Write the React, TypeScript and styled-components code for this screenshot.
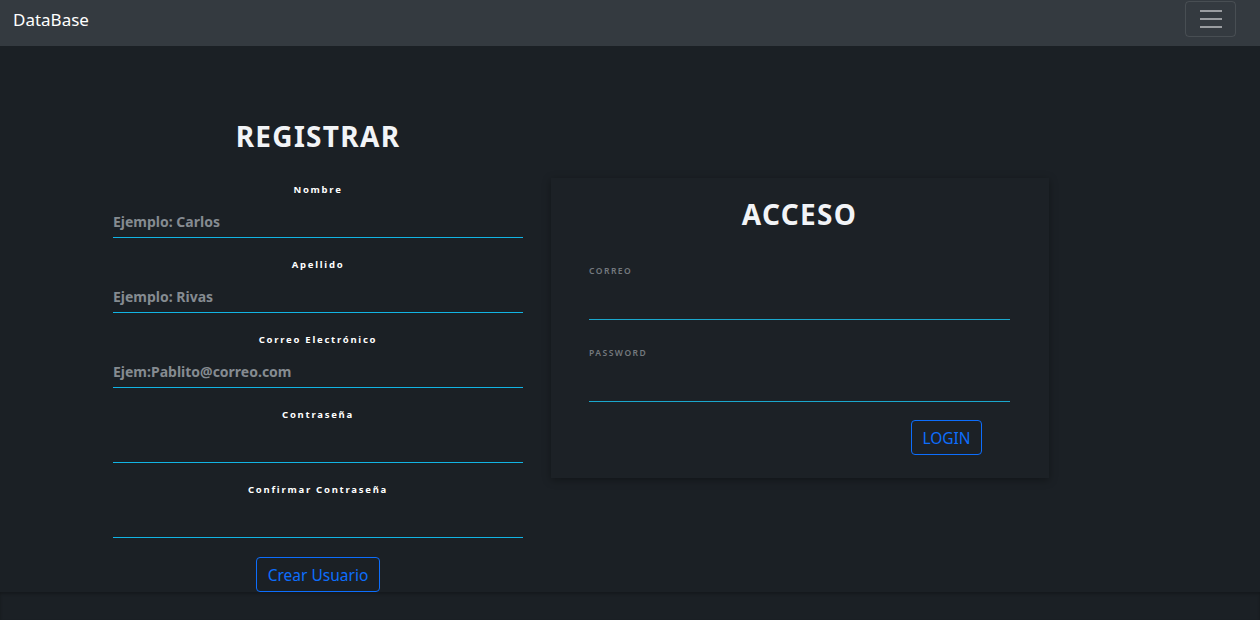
import React from "react";
import styled, { createGlobalStyle } from "styled-components";

const GlobalStyle = createGlobalStyle`
  html, body {
    margin: 0;
    padding: 0;
    background: #1b2025;
    font-family: "Noto Sans", "Open Sans", sans-serif;
  }
  * { box-sizing: border-box; }
`;

const Navbar = styled.nav`
  height: 46px;
  background: #343a40;
  display: flex;
  align-items: center;
  justify-content: space-between;
  padding: 0 24px 8px 13px;
`;

const Brand = styled.a`
  color: #fff;
  font-size: 17px;
  text-decoration: none;
`;

const Toggler = styled.button`
  width: 51px;
  height: 36px;
  background: transparent;
  border: 1px solid rgba(255, 255, 255, 0.1);
  border-radius: 4px;
  display: flex;
  flex-direction: column;
  align-items: center;
  justify-content: center;
  gap: 6px;
  padding: 0;
  span {
    display: block;
    width: 22px;
    height: 2px;
    background: #9a9da1;
  }
`;

const Main = styled.main`
  height: 546px;
  display: flex;
  align-items: flex-start;
  gap: 28px;
  padding: 70px 0 0 113px;
  overflow: hidden;
`;

const Register = styled.section`
  width: 410px;
  display: flex;
  flex-direction: column;
  align-items: center;
`;

const Title = styled.h1`
  margin: 0;
  height: 40px;
  line-height: 41px;
  font-size: 28px;
  font-weight: 700;
  letter-spacing: 1.3px;
  color: #f2f4f7;
  text-align: center;
`;

const Field = styled.div`
  width: 100%;
  display: flex;
  flex-direction: column;
  align-items: center;
  margin-top: 25px;
  & + & { margin-top: 18px; }
`;

const FieldLabel = styled.label`
  height: 17px;
  line-height: 18px;
  font-size: 9.5px;
  font-weight: 700;
  letter-spacing: 1.75px;
  color: #fff;
`;

const LineInput = styled.input`
  width: 100%;
  height: 40px;
  padding: 7px 0 0;
  background: transparent;
  border: none;
  border-bottom: 1px solid #12b4e4;
  outline: none;
  color: #fff;
  font-family: inherit;
  font-size: 14px;
  font-weight: 700;
  &::placeholder { color: #858b91; }
`;

const CreateButton = styled.button`
  margin-top: 19px;
  height: 35px;
  padding: 0 11px;
  background: transparent;
  border: 1px solid #0d6efd;
  border-radius: 4px;
  color: #0d6efd;
  font-family: inherit;
  font-size: 15.5px;
`;

const Card = styled.section`
  margin-top: 62px;
  width: 498px;
  padding: 16px 39px 23px 38px;
  background: #1c2126;
  box-shadow: 0 2px 8px rgba(0, 0, 0, 0.35);
  display: flex;
  flex-direction: column;
`;

const CardField = styled.div`
  display: flex;
  flex-direction: column;
  margin-top: 30px;
  & + & { margin-top: 26px; }
`;

const CardLabel = styled.label`
  height: 13px;
  line-height: 14px;
  font-size: 8.5px;
  font-weight: 600;
  letter-spacing: 1.5px;
  text-transform: uppercase;
  color: #74797e;
`;

const CardInput = styled(LineInput)`
  height: 43px;
  border-bottom-color: #1aa7cc;
`;

const Actions = styled.div`
  display: flex;
  justify-content: flex-end;
  padding-right: 28px;
  margin-top: 18px;
`;

const LoginButton = styled(CreateButton)`
  margin-top: 0;
  width: 71px;
  padding: 0;
`;

const Footer = styled.footer`
  height: 28px;
  background: #1b2025;
  box-shadow: inset 0 2px 3px rgba(0, 0, 0, 0.25);
`;

export default function App() {
  return (
    <>
      <GlobalStyle />
      <Navbar>
        <Brand href="#">DataBase</Brand>
        <Toggler aria-label="menu">
          <span />
          <span />
          <span />
        </Toggler>
      </Navbar>
      <Main>
        <Register>
          <Title>REGISTRAR</Title>
          <Field>
            <FieldLabel>Nombre</FieldLabel>
            <LineInput placeholder="Ejemplo: Carlos" />
          </Field>
          <Field>
            <FieldLabel>Apellido</FieldLabel>
            <LineInput placeholder="Ejemplo: Rivas" />
          </Field>
          <Field>
            <FieldLabel>Correo Electrónico</FieldLabel>
            <LineInput placeholder="Ejem:Pablito@correo.com" />
          </Field>
          <Field>
            <FieldLabel>Contraseña</FieldLabel>
            <LineInput type="password" />
          </Field>
          <Field>
            <FieldLabel>Confirmar Contraseña</FieldLabel>
            <LineInput type="password" />
          </Field>
          <CreateButton>Crear Usuario</CreateButton>
        </Register>
        <Card>
          <Title>ACCESO</Title>
          <CardField>
            <CardLabel>Correo</CardLabel>
            <CardInput />
          </CardField>
          <CardField>
            <CardLabel>Password</CardLabel>
            <CardInput type="password" />
          </CardField>
          <Actions>
            <LoginButton>LOGIN</LoginButton>
          </Actions>
        </Card>
      </Main>
      <Footer />
    </>
  );
}
